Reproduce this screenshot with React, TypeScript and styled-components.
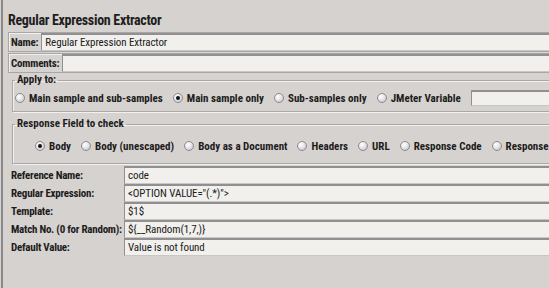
import { Fragment } from "react";
import styled, { createGlobalStyle } from "styled-components";

const GlobalStyle = createGlobalStyle`
  * { box-sizing: border-box; }
  body {
    margin: 0;
    background: #d6d2cf;
    font-family: "Roboto Condensed", "Liberation Sans Narrow", "DejaVu Sans Condensed", "Liberation Sans", Arial, sans-serif;
    color: #1c1c1c;
  }
`;

const Page = styled.div`
  width: 549px;
  height: 288px;
  overflow: hidden;
  background: #d6d2cf;
  display: flex;
`;

const Inner = styled.div`
  flex: 0 0 auto;
  width: 640px;
  margin-left: 1px;
  border-left: 2px solid #8b8889;
  display: flex;
  flex-direction: column;
`;

const Title = styled.h1`
  margin: 11px 0 3px 5px;
  font-size: 14px;
  line-height: 18px;
  letter-spacing: -0.3px;
  font-weight: bold;
  color: #1e1e1e;
`;

const FieldRow = styled.div<{ $gap?: number }>`
  display: flex;
  height: 20px;
  margin: ${({ $gap }) => `${$gap ?? 0}px 0 0 5px`};
  border: 1px solid #a9a6a6;
  border-right: none;
`;

const RowLabel = styled.label`
  display: flex;
  align-items: center;
  padding: 0 3px 0 2px;
  font-size: 11px;
  font-weight: bold;
  letter-spacing: -0.2px;
  box-shadow: inset 1px 1px 0 #f2f0ee;
`;

const TextBox = styled.div<{ $width?: number; $height?: number }>`
  flex: ${({ $width }) => ($width ? `0 0 ${$width}px` : "1 1 auto")};
  height: ${({ $height }) => ($height ? `${$height}px` : "auto")};
  display: flex;
  align-items: center;
  padding: 0 3px;
  background: #f1f0ed;
  border-top: 2px solid #918f91;
  border-left: 1px solid #918f91;
  border-bottom: 1px solid #c9c6c5;
  font-size: 11px;
  letter-spacing: -0.1px;
  white-space: nowrap;
  color: #202020;
`;

const Group = styled.fieldset<{ $top: number }>`
  margin: ${({ $top }) => `${$top}px 0 0 9px`};
  padding: 0;
  min-width: 0;
  border: 1px solid #aaa7a6;
  box-shadow: inset 1px 1px 0 #f3f1ef, 1px 1px 0 #f3f1ef;
`;

const Legend = styled.legend`
  margin-left: 2px;
  padding: 0 2px;
  font-size: 11px;
  line-height: 12px;
  font-weight: bold;
`;

const RadioRow = styled.div<{ $pad: number; $left: number }>`
  display: flex;
  align-items: center;
  gap: 10px;
  height: 18px;
  box-sizing: content-box;
  padding: ${({ $pad, $left }) => `${$pad}px 0 ${$pad + 1}px ${$left}px`};
`;

const Option = styled.span`
  display: flex;
  align-items: center;
  gap: 4px;
  font-size: 11px;
  font-weight: bold;
  white-space: nowrap;
`;

const Dot = styled.span<{ $checked?: boolean }>`
  position: relative;
  width: 10px;
  height: 10px;
  border-radius: 50%;
  border: 1px solid #8c8b90;
  background: radial-gradient(circle at 35% 30%, #ffffff 0%, #e6e6ea 45%, #b9b9c0 100%);

  &::after {
    content: "";
    display: ${({ $checked }) => ($checked ? "block" : "none")};
    position: absolute;
    left: 2px;
    top: 2px;
    width: 4px;
    height: 4px;
    border-radius: 50%;
    background: #111;
  }
`;

const Params = styled.div`
  margin-top: 2px;
  display: grid;
  grid-template-columns: 121px 1fr;
  grid-auto-rows: 18px;
`;

const ParamLabel = styled.label`
  display: flex;
  align-items: center;
  padding-left: 8px;
  font-size: 11px;
  font-weight: bold;
  letter-spacing: -0.25px;
  white-space: nowrap;
`;

const Radio = ({ label, checked }: { label: string; checked?: boolean }) => (
  <Option>
    <Dot $checked={checked} />
    {label}
  </Option>
);

const params = [
  ["Reference Name:", "code"],
  ["Regular Expression:", '<OPTION VALUE="(.*)">'],
  ["Template:", "$1$"],
  ["Match No. (0 for Random):", "${__Random(1,7,)}"],
  ["Default Value:", "Value is not found"],
];

export default function App() {
  return (
    <Page>
      <GlobalStyle />
      <Inner>
        <Title>Regular Expression Extractor</Title>
        <FieldRow>
          <RowLabel>Name:</RowLabel>
          <TextBox>Regular Expression Extractor</TextBox>
        </FieldRow>
        <FieldRow $gap={1}>
          <RowLabel>Comments:</RowLabel>
          <TextBox />
        </FieldRow>
        <Group $top={1}>
          <Legend>Apply to:</Legend>
          <RadioRow $pad={3} $left={2}>
            <Radio label="Main sample and sub-samples" />
            <Radio label="Main sample only" checked />
            <Radio label="Sub-samples only" />
            <Radio label="JMeter Variable" />
            <TextBox $width={130} $height={16} />
          </RadioRow>
        </Group>
        <Group $top={6}>
          <Legend>Response Field to check</Legend>
          <RadioRow $pad={7} $left={22}>
            <Radio label="Body" checked />
            <Radio label="Body (unescaped)" />
            <Radio label="Body as a Document" />
            <Radio label="Headers" />
            <Radio label="URL" />
            <Radio label="Response Code" />
            <Radio label="Response Message" />
          </RadioRow>
        </Group>
        <Params>
          {params.map(([label, value]) => (
            <Fragment key={label}>
              <ParamLabel>{label}</ParamLabel>
              <TextBox>{value}</TextBox>
            </Fragment>
          ))}
        </Params>
      </Inner>
    </Page>
  );
}
